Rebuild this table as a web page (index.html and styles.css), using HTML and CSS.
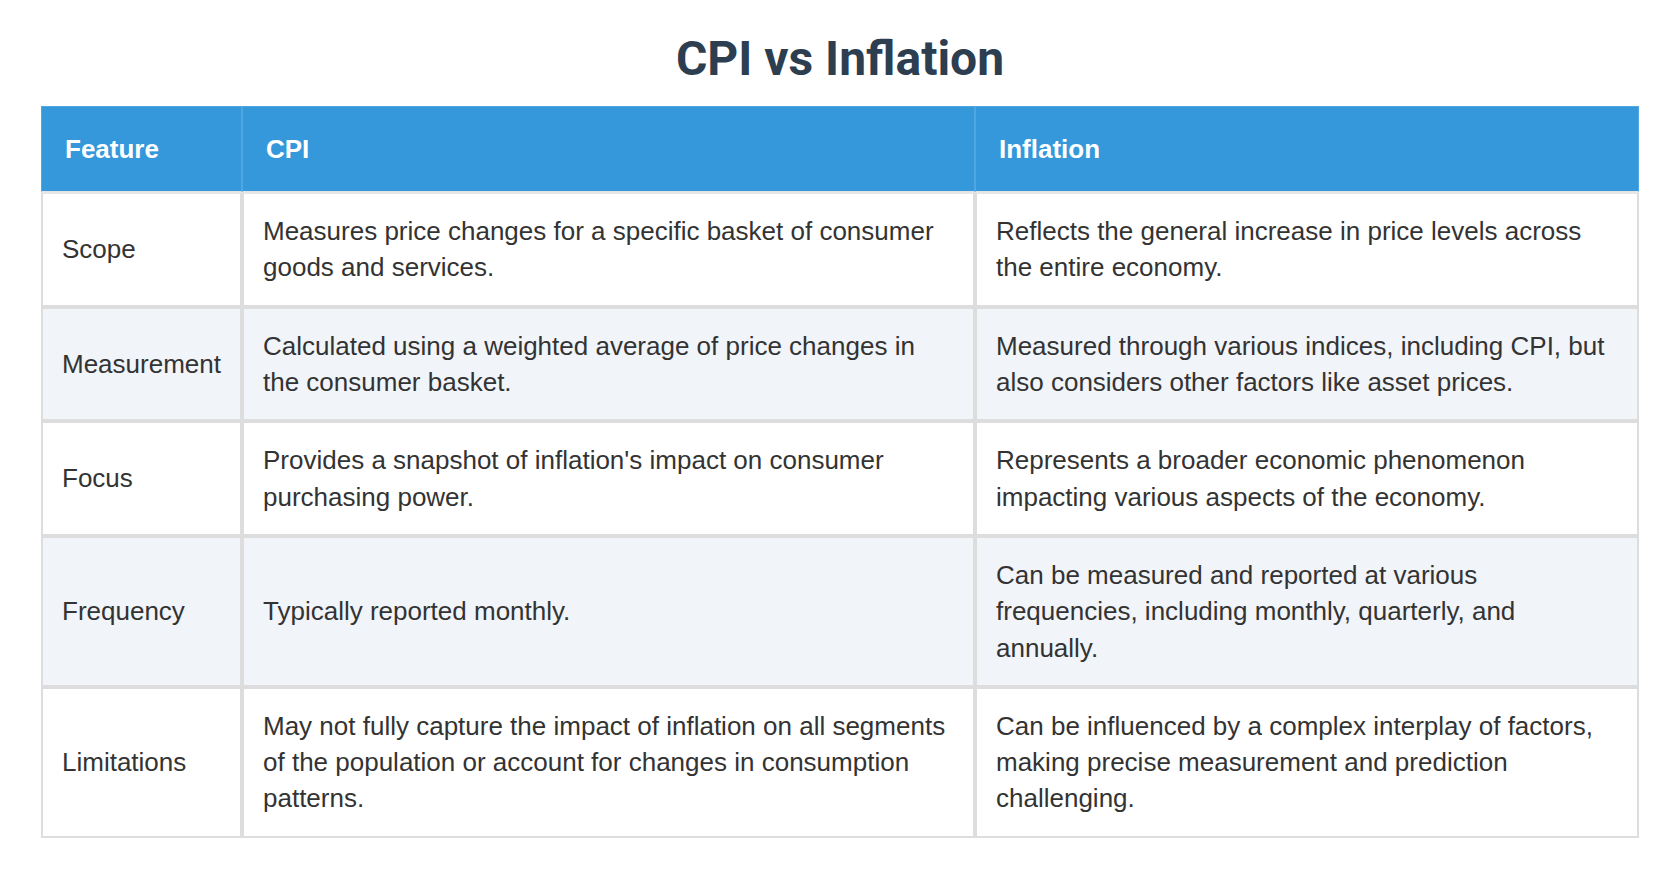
FILE: index.html
```html
<!DOCTYPE html>
<html lang="en">
<head>
<meta charset="utf-8">
<title>CPI vs Inflation</title>
<link rel="stylesheet" href="styles.css">
</head>
<body>
<div class="page">
  <h1 class="title">CPI vs Inflation</h1>
  <table class="compare">
    <colgroup>
      <col class="col-feature">
      <col class="col-cpi">
      <col class="col-inflation">
    </colgroup>
    <thead>
      <tr>
        <th>Feature</th>
        <th>CPI</th>
        <th>Inflation</th>
      </tr>
    </thead>
    <tbody>
      <tr>
        <td>Scope</td>
        <td>Measures price changes for a specific basket of consumer goods and services.</td>
        <td>Reflects the general increase in price levels across the entire economy.</td>
      </tr>
      <tr>
        <td>Measurement</td>
        <td>Calculated using a weighted average of price changes in the consumer basket.</td>
        <td>Measured through various indices, including CPI, but also considers other factors like asset prices.</td>
      </tr>
      <tr>
        <td>Focus</td>
        <td>Provides a snapshot of inflation's impact on consumer purchasing power.</td>
        <td>Represents a broader economic phenomenon impacting various aspects of the economy.</td>
      </tr>
      <tr>
        <td>Frequency</td>
        <td>Typically reported monthly.</td>
        <td>Can be measured and reported at various frequencies, including monthly, quarterly, and annually.</td>
      </tr>
      <tr>
        <td>Limitations</td>
        <td>May not fully capture the impact of inflation on all segments of the population or account for changes in consumption patterns.</td>
        <td>Can be influenced by a complex interplay of factors, making precise measurement and prediction challenging.</td>
      </tr>
    </tbody>
  </table>
</div>
</body>
</html>
```

FILE: styles.css
```css
html, body {
  margin: 0;
  padding: 0;
  background: #ffffff;
}

.page {
  padding: 30px 41px 40px;
  font-family: "Liberation Sans", Arial, sans-serif;
  color: #333333;
}

.title {
  margin: 0 0 18px;
  font-family: Roboto, "Liberation Sans", sans-serif;
  font-weight: 700;
  font-size: 48px;
  line-height: 1.2;
  text-align: center;
  color: #2c3e50;
}

.compare {
  width: 100%;
  table-layout: fixed;
  border-collapse: separate;
  border-spacing: 0;
  font-size: 26px;
  line-height: 1.4;
}

.col-feature { width: 201px; }
.col-cpi { width: 733px; }
.col-inflation { width: 664px; }

.compare th {
  background: #3498db;
  color: #ffffff;
  font-weight: 700;
  text-align: left;
  padding: 24px 22px 24px 23px;
  border: 1px solid #4fa6e0;
  border-bottom: 1px solid #e4e4e4;
}

.compare td {
  padding: 19px 18px 18.8px 19px;
  border: 2px solid #dddddd;
  vertical-align: middle;
  text-align: left;
}

.compare tbody tr:first-child td {
  border-top-color: #e6e6e6;
}

.compare tbody tr:nth-child(even) td {
  background: #f1f4f9;
}
```
